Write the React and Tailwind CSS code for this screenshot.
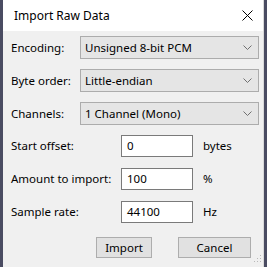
import React from 'react'

function Chevron(){
  return (
    <svg width="9" height="5" viewBox="0 0 9 5" className="shrink-0">
      <path d="M0.5 0.5 L4.5 4.5 L8.5 0.5" fill="none" stroke="#707070" strokeWidth="1" />
    </svg>
  )
}

function Select({ value }){
  return (
    <div className="w-[179px] h-[23px] ml-auto bg-[#e5e5e5] border border-[#acacac] flex items-center justify-between pl-[4px] pr-[6px]">
      <span>{value}</span>
      <Chevron />
    </div>
  )
}

function Field({ label, value, unit }){
  return (
    <div className="flex items-center h-[22px]">
      <span className="w-[110px]">{label}</span>
      <div className="w-[72px] h-[22px] bg-white border border-[#7a7a7a] flex items-center px-[5px]">{value}</div>
      <span className="ml-[10px]">{unit}</span>
    </div>
  )
}

export default function App(){
  return (
    <div className="w-[267px] h-[267px] flex bg-[#4a4c62] text-[11.5px] text-black" style={{ fontFamily: '"Noto Sans", sans-serif' }}>
      <div className="w-[3px]" />
      <div className="flex-1 flex flex-col border-r border-[#d9d9d9] mr-[3px]">
        <div className="h-[31px] bg-white flex items-center justify-between pl-[11px] pr-[10px] text-[12px]">
          <span>Import Raw Data</span>
          <svg width="11" height="11" viewBox="0 0 11 11">
            <path d="M0.5 0.5 L10.5 10.5 M10.5 0.5 L0.5 10.5" stroke="#000" strokeWidth="1" />
          </svg>
        </div>
        <div className="flex-1 bg-[#f0f0f0] flex flex-col pl-[8px] pr-[4px] pt-[5px] relative">
          <div className="flex flex-col gap-[10px]">
            <div className="flex items-center"><span>Encoding:</span><Select value="Unsigned 8-bit PCM" /></div>
            <div className="flex items-center"><span>Byte order:</span><Select value="Little-endian" /></div>
            <div className="flex items-center"><span>Channels:</span><Select value="1 Channel (Mono)" /></div>
          </div>
          <div className="flex flex-col gap-[11px] mt-[10px]">
            <Field label="Start offset:" value="0" unit="bytes" />
            <Field label="Amount to import:" value="100" unit="%" />
            <Field label="Sample rate:" value="44100" unit="Hz" />
          </div>
          <div className="flex mt-[14px] ml-[85px] gap-[26px]">
            <button className="w-[56px] h-[21px] bg-[#e1e1e1] border border-[#adadad] flex items-center justify-center">Import</button>
            <button className="w-[73px] h-[21px] bg-[#e1e1e1] border border-[#adadad] flex items-center justify-center">Cancel</button>
          </div>
          <svg width="8" height="8" viewBox="0 0 8 8" className="absolute right-[1px] bottom-[4px]">
            <rect x="6" y="0" width="1" height="1" fill="#b8b8b8" />
            <rect x="3" y="3" width="1" height="1" fill="#b8b8b8" />
            <rect x="6" y="3" width="1" height="1" fill="#b8b8b8" />
            <rect x="0" y="6" width="1" height="1" fill="#b8b8b8" />
            <rect x="3" y="6" width="1" height="1" fill="#b8b8b8" />
            <rect x="6" y="6" width="1" height="1" fill="#b8b8b8" />
          </svg>
        </div>
      </div>
    </div>
  )
}
